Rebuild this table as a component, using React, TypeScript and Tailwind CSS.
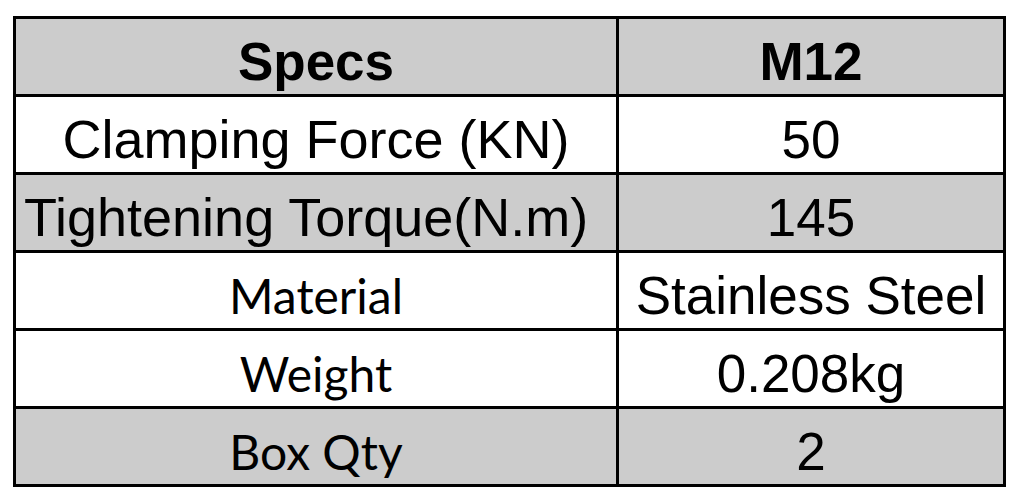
import React from 'react';

const arial = "font-['Liberation_Sans',Arial,sans-serif]";
const calibri = "font-['Lato','Carlito',sans-serif]";

const rows = [
  { label: 'Specs', value: 'M12', gray: true, header: true, labelClass: `${arial} text-[53px] font-bold justify-center` },
  { label: 'Clamping Force (KN)', value: '50', gray: false, labelClass: `${arial} text-[54px] justify-center` },
  { label: 'Tightening Torque(N.m)', value: '145', gray: true, labelClass: `${arial} text-[54px] justify-start pl-[8px]` },
  { label: 'Material', value: 'Stainless Steel', gray: false, labelClass: `${calibri} text-[48px] justify-center` },
  { label: 'Weight', value: '0.208kg', gray: false, labelClass: `${calibri} text-[48px] justify-center` },
  { label: 'Box Qty', value: '2', gray: true, labelClass: `${calibri} text-[48px] justify-center` },
];

export default function App() {
  return (
    <div className="w-[1017px] h-[497px] bg-white pt-[16px] pl-[13px] text-black">
      <div className="w-[993px] border-[3px] border-black flex flex-col">
        {rows.map((row, i) => (
          <div
            key={i}
            className={`flex ${i > 0 ? 'h-[78px] border-t-[3px] border-black' : 'h-[75px]'} ${
              row.gray ? 'bg-[#cccccc]' : 'bg-white'
            }`}
          >
            <div className={`w-[600px] flex items-center pt-2.5 whitespace-nowrap ${row.labelClass}`}>
              {row.label}
            </div>
            <div
              className={`w-[387px] border-l-[3px] border-black flex items-center justify-center pt-2.5 whitespace-nowrap ${arial} text-[53px] ${
                row.header ? 'font-bold' : ''
              }`}
            >
              {row.value}
            </div>
          </div>
        ))}
      </div>
    </div>
  );
}
